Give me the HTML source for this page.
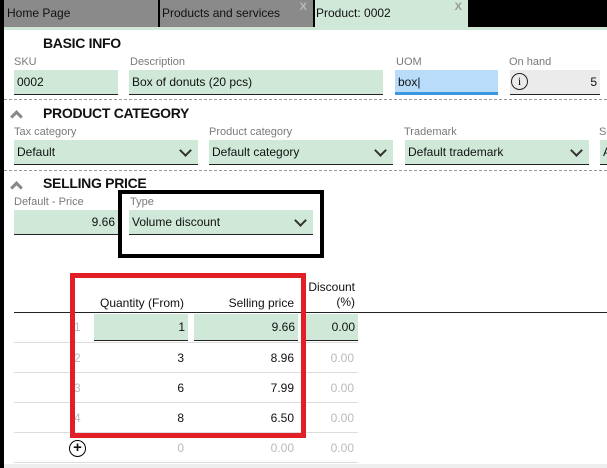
<!DOCTYPE html>
<html><head><style>
*{margin:0;padding:0;box-sizing:border-box}
body{width:607px;height:468px;background:#fff;position:relative;overflow:hidden;font-family:"Liberation Sans",sans-serif;font-size:12px;color:#111}
.a{position:absolute;white-space:nowrap}
.lbl{color:#7a7a7a;font-size:11px}
.in{position:absolute;background:#cfe8d8;border-bottom:1px solid #222;height:25px;line-height:24px;padding:0 3px;font-size:12px}
.h{font-weight:bold;font-size:14px;letter-spacing:-0.3px}
.dd::after{content:"";position:absolute;right:8px;top:6px;width:7px;height:7px;border-right:2px solid #333;border-bottom:2px solid #333;transform:rotate(45deg)}
.dash{position:absolute;left:4px;right:0;border-top:1px dashed #999}
.chev{position:absolute;width:9px;height:9px;border-left:3px solid #888;border-top:3px solid #888;transform:rotate(45deg)}
.r{text-align:right}
.row{position:absolute;left:14px;width:344px;border-top:1px solid #ddd}
.gray{color:#bbb}
</style></head><body>
<div class="a" style="left:0;top:0;width:607px;height:28px;background:#000"></div>
<div class="a" style="left:4px;top:0;width:154px;height:27px;background:#8a8a8a;line-height:27px;padding-left:3px">Home Page</div>
<div class="a" style="left:160px;top:0;width:153px;height:27px;background:#8a8a8a;line-height:27px;padding-left:2px">Products and services<span style="position:absolute;right:6px;top:-6px;color:#bbb;font-weight:bold;font-size:11px">X</span></div>
<div class="a" style="left:315px;top:0;width:153px;height:28px;background:#cfe8d8;line-height:27px;padding-left:1px">Product: 0002<span style="position:absolute;right:6px;top:-6px;color:#999;font-weight:bold;font-size:11px">X</span></div>
<div class="a" style="left:4px;top:27px;width:603px;height:3px;background:#cfe8d8"></div>
<div class="a" style="left:0;top:0;width:4px;height:468px;background:#000"></div>

<div class="a h" style="left:43px;top:35px">BASIC INFO</div>
<div class="a lbl" style="left:14px;top:56px">SKU</div>
<div class="a lbl" style="left:130px;top:56px">Description</div>
<div class="a lbl" style="left:396px;top:56px">UOM</div>
<div class="a lbl" style="left:509px;top:56px">On hand</div>
<div class="in" style="left:14px;top:70px;width:104px">0002</div>
<div class="in" style="left:129px;top:70px;width:254px">Box of donuts (20 pcs)</div>
<div class="in" style="left:395px;top:70px;width:103px;background:#b9dcfb;border-bottom:3px solid #3a97e0">box|</div>
<div class="in" style="left:510px;top:70px;width:90px;background:#ebebeb;text-align:right">5<span style="position:absolute;left:1px;top:3px;width:17px;height:17px;border:1.5px solid #222;border-radius:50%;line-height:14px;text-align:center;font-family:'Liberation Serif',serif;font-size:12px">i</span></div>
<div class="dash" style="top:99px"></div>

<div class="chev" style="left:12px;top:112px"></div>
<div class="a h" style="left:43px;top:105px">PRODUCT CATEGORY</div>
<div class="a lbl" style="left:14px;top:126px">Tax category</div>
<div class="a lbl" style="left:209px;top:126px">Product category</div>
<div class="a lbl" style="left:404px;top:126px">Trademark</div>
<div class="a lbl" style="left:599px;top:126px">Se</div>
<div class="in dd" style="left:14px;top:140px;width:184px">Default</div>
<div class="in dd" style="left:209px;top:140px;width:184px">Default category</div>
<div class="in dd" style="left:405px;top:140px;width:184px">Default trademark</div>
<div class="in" style="left:600px;top:140px;width:20px">A</div>
<div class="dash" style="top:170px"></div>

<div class="chev" style="left:12px;top:183px"></div>
<div class="a h" style="left:43px;top:175px">SELLING PRICE</div>
<div class="a lbl" style="left:14px;top:196px">Default - Price</div>
<div class="a lbl" style="left:130px;top:196px">Type</div>
<div class="in r" style="left:14px;top:210px;width:104px">9.66</div>
<div class="in dd" style="left:129px;top:210px;width:184px">Volume discount</div>
<div class="a" style="left:118px;top:190px;width:206px;height:68px;border:4px solid #000"></div>

<div class="a" style="left:307px;top:280px;width:48px;text-align:right;line-height:15px">Discount<br>(%)</div>
<div class="a r" style="left:90px;top:296px;width:94px">Quantity (From)</div>
<div class="a r" style="left:194px;top:296px;width:100px">Selling price</div>
<div class="a" style="left:14px;top:312px;width:593px;border-top:1px solid #222"></div>

<div class="in r" style="left:94px;top:314px;width:94px;height:27px;line-height:26px">1</div>
<div class="in r" style="left:194px;top:314px;width:104px;height:27px;line-height:26px">9.66</div>
<div class="in r" style="left:306px;top:314px;width:52px;height:27px;line-height:26px">0.00</div>
<div class="a gray" style="left:74px;top:320px">1</div>

<div class="row" style="top:342px"></div>
<div class="row" style="top:372px"></div>
<div class="row" style="top:402px"></div>
<div class="row" style="top:432px"></div>
<div class="row" style="top:462px"></div>
<div class="a" style="left:4px;top:464px;width:603px;height:4px;background:#eee"></div>

<div class="a gray" style="left:74px;top:351px">2</div>
<div class="a gray" style="left:74px;top:381px">3</div>
<div class="a gray" style="left:74px;top:411px">4</div>
<div class="a r" style="left:140px;top:351px;width:44px">3</div>
<div class="a r" style="left:230px;top:351px;width:64px">8.96</div>
<div class="a r gray" style="left:300px;top:351px;width:54px">0.00</div>
<div class="a r" style="left:140px;top:381px;width:44px">6</div>
<div class="a r" style="left:230px;top:381px;width:64px">7.99</div>
<div class="a r gray" style="left:300px;top:381px;width:54px">0.00</div>
<div class="a r" style="left:140px;top:411px;width:44px">8</div>
<div class="a r" style="left:230px;top:411px;width:64px">6.50</div>
<div class="a r gray" style="left:300px;top:411px;width:54px">0.00</div>
<div class="a r gray" style="left:140px;top:441px;width:44px">0</div>
<div class="a r gray" style="left:230px;top:441px;width:64px">0.00</div>
<div class="a r gray" style="left:300px;top:441px;width:54px">0.00</div>
<div class="a" style="left:69px;top:440px;width:17px;height:17px;border:1.5px solid #000;border-radius:50%;text-align:center;line-height:13px;font-weight:bold;font-size:15px">+</div>

<div class="a" style="left:70px;top:273px;width:236px;height:165px;border:5px solid #e21f26"></div>
</body></html>
